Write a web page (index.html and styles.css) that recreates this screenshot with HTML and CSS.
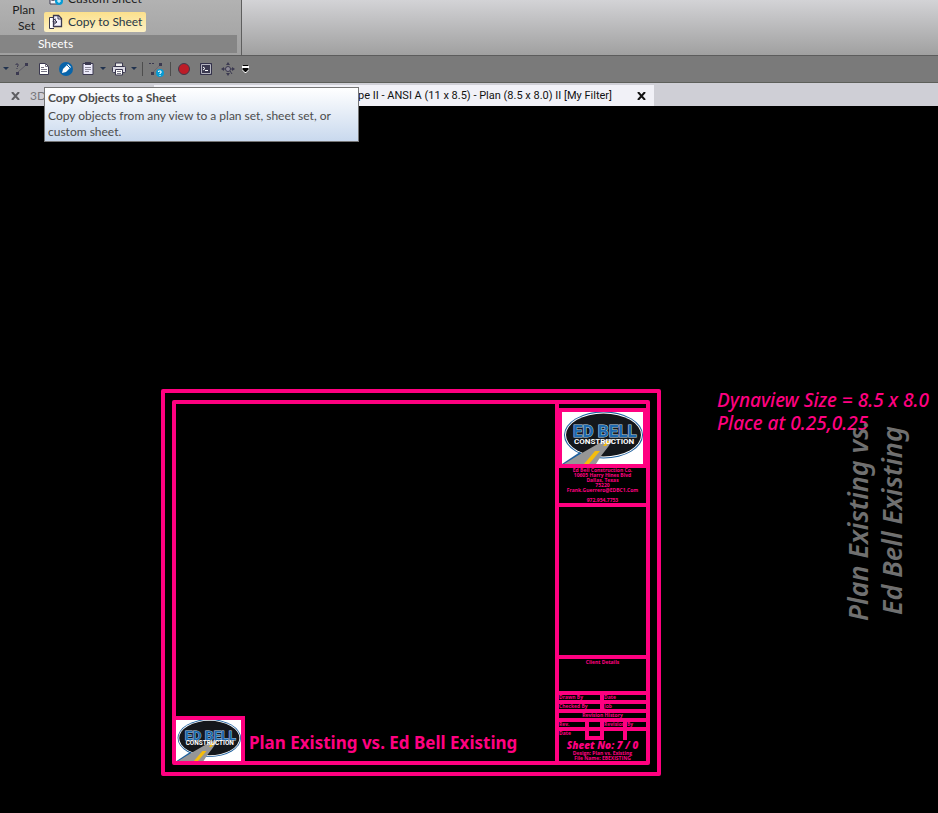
FILE: index.html
```html
<!DOCTYPE html>
<html lang="en">
<head>
<meta charset="utf-8">
<title>Copy to Sheet</title>
<link rel="stylesheet" href="styles.css">
</head>
<body>
<header class="ribbon">
  <section class="group">
    <div class="group-body">
      <button class="large-button">Plan<br>Set</button>
      <div class="commands">
        <button class="command">
          <svg width="16" height="16" viewBox="0 0 16 16"><path d="M2 2H12V13H2Z" fill="#f5f5fa" stroke="#3b3950"/><path d="M5 3V10M8 3V10M3 9H10" stroke="#3b3950"/><circle cx="11" cy="10" r="4" fill="#079bd4"/><path d="M9 10H13M11 8V12" stroke="#fff"/></svg>
          <span>Custom Sheet</span>
        </button>
        <button class="command active">
          <svg width="16" height="16" viewBox="0 0 16 16"><path d="M6 3.500H1.500V14.500H6" fill="#fff" stroke="#3b3950"/><path d="M5.500 1.500H10.500L13.500 4.500V12.500H5.500Z" fill="#f4f3ff" stroke="#3b3950" stroke-width="1.300"/><path d="M10 2V5H13" fill="none" stroke="#3b3950"/><path d="M8 5Q5 5 5 8H9M7 6 9 8 5 11" fill="none" stroke="#3b3950"/></svg>
          <span>Copy to Sheet</span>
        </button>
      </div>
    </div>
    <div class="group-title">Sheets</div>
  </section>
</header>

<nav class="toolbar" aria-label="Quick access">
  <button class="arrow" aria-label="More"><svg width="6" height="4" viewBox="0 0 6 4"><path d="M0 0H6L3 3Z" fill="#20324f"/></svg></button>
  <button class="tool" aria-label="Inquire line"><svg width="16" height="16" viewBox="0 0 16 16"><path d="M4 11 12 4" stroke="#5a5764"/><path d="M2 11H5V14H2ZM11 2H14V5H11Z" fill="#3b3950"/><path d="M2 4V3H4V5L3 6M3 7V8" fill="none" stroke="#3b3950"/></svg></button>
  <button class="tool" aria-label="New"><svg width="16" height="16" viewBox="0 0 16 16"><path d="M3.500 2.500H9.500L12.500 5.500V13.500H3.500Z" fill="#fff" stroke="#3b3950"/><path d="M9.500 3V5.500H12M5 6.500H8M5 8.500H11M5 10.500H11" fill="none" stroke="#777584"/></svg></button>
  <button class="tool" aria-label="Edit"><svg width="16" height="16" viewBox="0 0 16 16"><circle cx="8" cy="8" r="7" fill="#0864aa"/><path d="M4 12 5 8 10 3 13 6 8 11Z" fill="#fff"/><path d="M9 4 12 7" stroke="#0864aa"/></svg></button>
  <button class="tool" aria-label="Paste"><svg width="16" height="16" viewBox="0 0 16 16"><path d="M3 2.500H13V13.500H3Z" fill="#eceafa" stroke="#3b3950"/><path d="M5 1H11V4H5Z" fill="#3b3950"/><path d="M5 6.500H11M5 8.500H11M5 10.500H9" stroke="#8d8b9b"/></svg></button>
  <button class="arrow" aria-label="Paste options"><svg width="6" height="4" viewBox="0 0 6 4"><path d="M0 0H6L3 3Z" fill="#20324f"/></svg></button>
  <button class="tool" aria-label="Print"><svg width="16" height="16" viewBox="0 0 16 16"><path d="M4.500 2H11.500V6H4.500Z" fill="#eee" stroke="#3b3950"/><rect x="1.500" y="5.500" width="13" height="6" rx="1" fill="#d9d8e2" stroke="#3b3950"/><path d="M4.500 8.500H11.500V14H4.500Z" fill="#fff" stroke="#3b3950"/><path d="M6 10.500H10M6 12.500H10" stroke="#777584"/></svg></button>
  <button class="arrow" aria-label="Print options"><svg width="6" height="4" viewBox="0 0 6 4"><path d="M0 0H6L3 3Z" fill="#20324f"/></svg></button>
  <span class="divider"></span>
  <button class="tool" aria-label="Line help"><svg width="16" height="16" viewBox="0 0 16 16"><path d="M5 11 11 5" stroke="#6a6774"/><path d="M3 11H6V14H3ZM11 2H14V5H11Z" fill="#3b3950"/><path d="M1 2.500H3M4 2.500H6" stroke="#3b3950"/><circle cx="12" cy="12" r="4" fill="#079bd4"/><path d="M10.500 11V10H13V12H12V13M12 14V15" fill="none" stroke="#fff"/></svg></button>
  <span class="divider"></span>
  <button class="tool" aria-label="Record"><svg width="16" height="16" viewBox="0 0 16 16"><circle cx="8" cy="8" r="5.500" fill="#bd1c27" stroke="#42384b"/></svg></button>
  <button class="tool" aria-label="Command line"><svg width="16" height="16" viewBox="0 0 16 16"><path d="M2.500 2.500H13.500V13.500H2.500Z" fill="#3b3950" stroke="#33314a"/><path d="M3.500 3.500H12.500V12.500H3.500Z" fill="none" stroke="#b4b4c0"/><path d="M5 6 7 7.500 5 9M7 9.500H10" fill="none" stroke="#fff"/></svg></button>
  <button class="tool" aria-label="Move"><svg width="16" height="16" viewBox="0 0 16 16"><path d="M8 1 10 4H6ZM8 15 6 12H10ZM1 8 4 6V10ZM15 8 12 10V6Z" fill="#3b3950"/><path d="M3 8H13M10 10 12 13" stroke="#3b3950"/><circle cx="8" cy="8" r="2.500" fill="#8d8a96" stroke="#3b3950"/></svg></button>
  <button class="arrow last" aria-label="Customize"><svg width="7" height="8" viewBox="0 0 7 8"><path d="M0 1H7V3H0ZM0 5 3 8H4L7 5Z" fill="#fff"/><path d="M1 0H6V1H1ZM1 3H6V5L4 7H3L1 5Z" fill="#000"/></svg></button>
</nav>

<div class="tabs">
  <div class="tab idle"><button class="close" aria-label="Close 3D"><svg width="9" height="8" viewBox="0 0 9 8"><path d="M1 0 8 8M8 0 1 8" stroke="currentColor" stroke-width="2"/></svg></button><span>3D</span></div>
  <div class="tab current"><span>Landscape II - ANSI A (11 x 8.5) - Plan (8.5 x 8.0) II [My Filter]</span><button class="close" aria-label="Close sheet"><svg width="9" height="8" viewBox="0 0 9 8"><path d="M1 0 8 8M8 0 1 8" stroke="currentColor" stroke-width="2"/></svg></button></div>
  <div class="tooltip" role="tooltip">
    <strong>Copy Objects to a Sheet</strong>
    <p>Copy objects from any view to a plan set, sheet set, or custom sheet.</p>
  </div>
</div>

<main class="canvas">
  <article class="sheet">
    <div class="frame">
      <div class="view">
        <div class="caption">
          <svg class="caption-logo" viewBox="0 0 81 52" preserveAspectRatio="xMidYMid slice" role="img" aria-label="Ed Bell Construction">
            <g id="logo">
              <rect width="81" height="52" fill="#fff"/>
              <ellipse cx="41.500" cy="23" rx="39.500" ry="23.500" fill="#1c5f9e"/>
              <ellipse cx="41.500" cy="23" rx="38.500" ry="22.500" fill="#fff"/>
              <ellipse cx="41.500" cy="23" rx="37.500" ry="21.500" fill="#14171b"/>
              <path d="M0 52 18 40 20 42 4 52Z" fill="#1c5f9e"/>
              <path d="M2 52 20 41 34 33 45 27H51L46 35 39 44 34 52Z" fill="#969696"/>
              <path d="M22 52 33 39H38L27 52ZM41 34 45 29H48L44 34Z" fill="#f5bd0c"/>
              <text x="11" y="25" class="logo-name">ED BELL</text>
              <text x="12" y="32" class="logo-sub">CONSTRUCTION</text>
            </g>
          </svg>
          <h1>Plan Existing vs. Ed Bell Existing</h1>
        </div>
      </div>
      <aside class="title-block">
        <div class="logo-box"><svg class="block-logo" viewBox="0 0 81 52" preserveAspectRatio="xMidYMid slice" role="img" aria-label="Ed Bell Construction"><use href="#logo"/></svg></div>
        <address>Ed Bell Construction Co.<br>10605 Harry Hines Blvd<br>Dallas, Texas<br>75220<br>Frank.Guerrero@EDBC1.Com<br><br>972.954.7753</address>
        <div class="notes"></div>
        <div class="client">Client Details</div>
        <div class="row two"><span>Drawn By</span><span>Date</span></div>
        <div class="row two"><span>Checked By</span><span>Job</span></div>
        <div class="row center">Revision History</div>
        <div class="row three"><span>Rev.</span><span></span><span>Revision</span><span>By</span></div>
        <div class="row three open"><span>Date</span><span></span><span></span><span></span></div>
        <div class="number"><strong>Sheet No: 7 / 0</strong><span>Design: Plan vs. Existing</span><span>File Name: EBEXISTING</span></div>
      </aside>
    </div>
  </article>
  <p class="note">Dynaview Size = 8.5 x 8.0<br>Place at 0.25,0.25</p>
  <p class="side-label">Plan Existing vs.<br>Ed Bell Existing</p>
</main>
</body>
</html>
```
FILE: styles.css
```css
* { box-sizing: border-box; }
body {
  margin: 0;
  min-height: 100vh;
  display: flex;
  flex-direction: column;
  background: #000;
  font: 12px/16px Lato, "Noto Sans", sans-serif;
  color: #1c1c1c;
  overflow: hidden;
}
button { border: 0; padding: 0; background: none; font: inherit; color: inherit; }
svg { display: block; flex: none; }
p, h1 { margin: 0; }

.ribbon {
  height: 55px;
  display: flex;
  align-items: flex-end;
  background: linear-gradient(#d3d3d6, #a0a0a0);
}
.group {
  width: 242px;
  height: 55px;
  display: flex;
  flex-direction: column;
  justify-content: flex-end;
  padding-right: 4px;
  background: linear-gradient(#b2b2b2, #a0a0a0);
  border-right: 1px solid #5e5e5e;
}
.group-body { display: flex; align-items: flex-end; }
.large-button { width: 44px; text-align: right; padding: 0 9px 1px 0; }
.commands { display: flex; flex-direction: column; align-items: flex-start; padding-bottom: 3px; }
.command { display: flex; align-items: center; gap: 4px; height: 20px; padding: 0 4px; border-radius: 2px; margin-top: 3px; }
.command.active { background: linear-gradient(#fbe08c, #fdf1c4); color: #27384a; }
.group-title { height: 18px; line-height: 18px; background: #858585; color: #fff; text-align: center; padding-right: 126px; margin-bottom: 2px; }

.toolbar {
  height: 28px;
  display: flex;
  align-items: center;
  padding-left: 5px;
  background: #7a7a7a;
  border-top: 1px solid #5c5c5c;
  border-bottom: 1px solid #5d5f5a;
}
.tool { margin-right: 6px; }
.arrow { margin: 0 5px 0 -2px; }
.arrow.last { margin-left: 0; }
.divider { width: 1px; height: 14px; background: #4d4d4d; margin-right: 5px; }

.tabs { position: relative; z-index: 2; height: 23px; display: flex; align-items: flex-end; background: #cfcfd6; }
.tab { display: flex; align-items: center; height: 21px; }
.idle { width: 154px; padding-left: 11px; gap: 10px; color: #77777b; }
.idle .close { color: #5e5e62; }
.current { width: 500px; justify-content: flex-end; gap: 25px; padding-right: 8px; background: #f1f1f7; color: #111; font: 11px/16px Roboto, sans-serif; }
.tooltip {
  position: absolute;
  left: 44px;
  top: 4px;
  width: 315px;
  padding: 2px 3px 1px;
  background: linear-gradient(#fff, #c9d9ee);
  border: 1px solid #767676;
  color: #4c4c4c;
}
.tooltip strong { display: block; margin-bottom: 2px; }

.canvas { position: relative; flex: 1; color: #ff0080; }
.sheet { position: absolute; left: 161px; top: 283px; width: 500px; height: 387px; border: 4px solid #ff0080; border-radius: 2px; padding: 7px; }
.frame { height: 100%; display: flex; border: 4px solid #ff0080; border-radius: 2px; }
.view { flex: 1; display: flex; align-items: flex-end; }
.caption { display: flex; align-items: center; gap: 4px; }
.caption-logo { box-sizing: content-box; width: 65px; height: 41px; border: solid #ff0080; border-width: 4px 4px 0 0; }
h1 { font: bold 17px/24px "Noto Sans", sans-serif; white-space: nowrap; padding-top: 8px; }
.title-block { width: 91px; border-left: 4px solid #ff0080; display: flex; flex-direction: column; font: bold 5px/5px "Open Sans", sans-serif; text-align: center; }
.title-block > * { flex: none; }
.logo-box { margin-top: 4px; height: 60px; padding: 4px 3px; background: #ff0080; }
.block-logo { width: 100%; height: 52px; }
.title-block address { height: 39px; border-bottom: 4px solid #ff0080; font-style: normal; white-space: nowrap; }
.notes { height: 152px; border-bottom: 4px solid #ff0080; }
.client { height: 36px; border-bottom: 4px solid #ff0080; line-height: 6px; }
.row { display: grid; height: 9px; border-bottom: 4px solid #ff0080; white-space: nowrap; text-align: left; }
.row.center { text-align: center; }
.two { grid-template-columns: 41px 1fr; }
.two span + span, .three span + span { border-left: 4px solid #ff0080; }
.three { grid-template-columns: 26px 15px 23px 1fr; }
.three.open { border-bottom: 0; }
.open span:nth-child(2) { border-bottom: 4px solid #ff0080; }
.number { display: flex; flex-direction: column; }
.number strong { font: italic 900 10px/11px "Noto Sans", sans-serif; }

.note { position: absolute; left: 717px; top: 283px; font: italic 500 19px/23px "Noto Sans", sans-serif; white-space: nowrap; }
.side-label { position: absolute; left: 841px; top: 314px; color: #707070; font: italic 600 27px/34px "Noto Sans", sans-serif; text-align: center; writing-mode: vertical-rl; white-space: nowrap; transform: rotate(180deg); }

.logo-name { font: bold 17px "Liberation Sans Narrow", Roboto, sans-serif; fill: #1d68ad; stroke: #b9d3e8; stroke-width: 1px; paint-order: stroke; }
.logo-sub { font: bold 8px Roboto, sans-serif; fill: #fff; }
```
